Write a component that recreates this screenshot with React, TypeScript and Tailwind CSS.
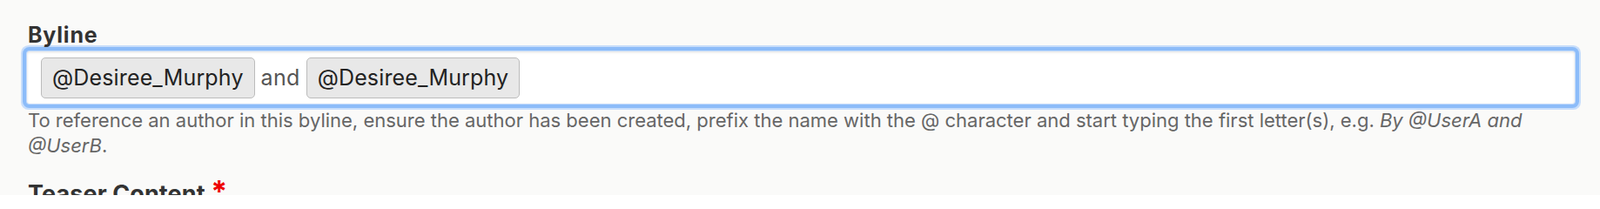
import React from "react";

function Chip({ children }: { children: React.ReactNode }) {
  return (
    <span className="inline-flex h-[47px] items-center rounded-[5px] border border-[#bcbcbc] bg-[#e8e8e8] px-[12px] text-[25px] leading-none tracking-[0.15px] text-[#222]">
      {children}
    </span>
  );
}

export default function App() {
  return (
    <div
      className="h-[224px] w-full overflow-hidden bg-[#fafaf9] pl-[31px] pr-[29px]"
      style={{ fontFamily: 'Inter, "Liberation Sans", Arial, sans-serif' }}
    >
      <div className="pt-[26px] pl-[1px] text-[25px] font-bold leading-[28px] tracking-[0.8px] text-[#333]">
        Byline
      </div>
      <div className="mt-[5px] rounded-[3px] shadow-[0_0_0_1px_#c3dbfb,0_0_0_5px_#8cbcf9,0_0_0_7px_#c8defb]">
        <div className="flex h-[60px] items-center gap-[7px] rounded-[3px] bg-white pl-[16px] shadow-[inset_0_1px_3px_rgba(0,0,0,0.12)]">
          <Chip>@Desiree_Murphy</Chip>
          <span className="text-[25px] leading-none tracking-[0.3px] text-[#555]">and</span>
          <Chip>@Desiree_Murphy</Chip>
        </div>
      </div>
      <p className="mt-[5px] pl-[1px] pr-[40px] text-[22px] leading-[29px] text-[#666]">
        To reference an author in this byline, ensure the author has been created, prefix the name with the @ character and start typing the first letter(s), e.g.{" "}
        <em>By @UserA and @UserB</em>.
      </p>
      <div className="mt-[23px] pl-[1px] text-[27px] font-bold leading-[30px] tracking-[0.1px] text-[#333]">
        Teaser Content <span className="text-[34px] text-[#e00]">*</span>
      </div>
    </div>
  );
}
